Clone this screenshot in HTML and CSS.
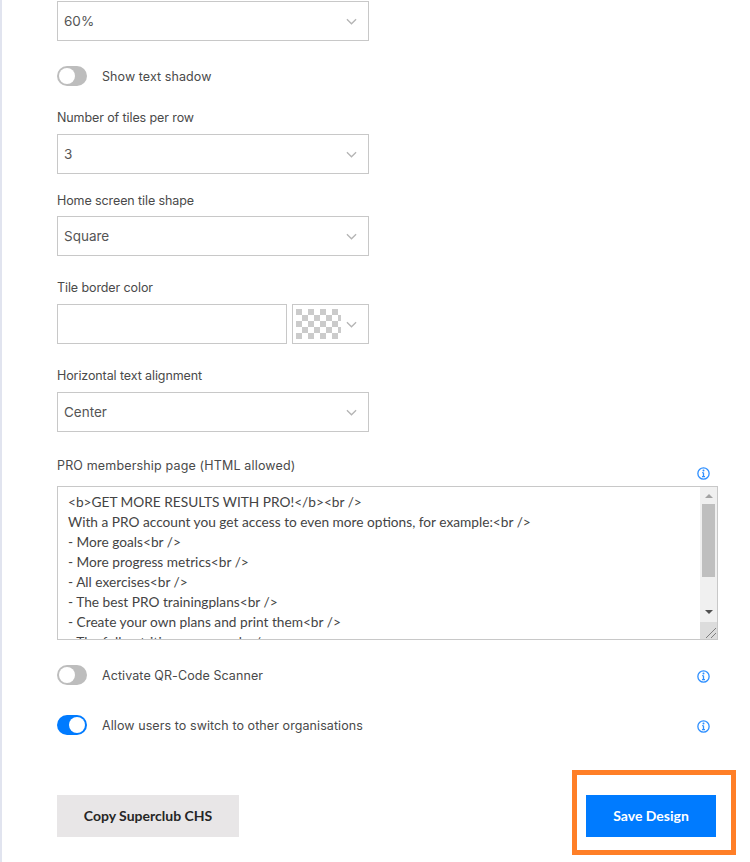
FILE: index.html
```html
<!DOCTYPE html>
<html lang="en">
<head>
  <meta charset="UTF-8" />
  <title>Design settings</title>
  <link rel="stylesheet" href="styles.css">
</head>
<body>
  <div class="page">
    <div class="select first"><span>60%</span><svg class="chev" viewBox="0 0 12 7"><path d="M1 1l5 5 5-5"/></svg></div>

    <div class="toggle-row shadow-row">
      <span class="toggle"></span>
      <span class="toggle-label">Show text shadow</span>
    </div>

    <label class="field-label tiles-label">Number of tiles per row</label>
    <div class="select"><span>3</span><svg class="chev" viewBox="0 0 12 7"><path d="M1 1l5 5 5-5"/></svg></div>

    <label class="field-label shape-label">Home screen tile shape</label>
    <div class="select"><span>Square</span><svg class="chev" viewBox="0 0 12 7"><path d="M1 1l5 5 5-5"/></svg></div>

    <label class="field-label border-label">Tile border color</label>
    <div class="color-row">
      <div class="color-input"></div>
      <div class="color-pick">
        <span class="checker"></span>
        <svg class="chev" viewBox="0 0 12 7"><path d="M1 1l5 5 5-5"/></svg>
      </div>
    </div>

    <label class="field-label align-label">Horizontal text alignment</label>
    <div class="select"><span>Center</span><svg class="chev" viewBox="0 0 12 7"><path d="M1 1l5 5 5-5"/></svg></div>

    <div class="pro-head">
      <label class="field-label pro-label">PRO membership page (HTML allowed)</label>
      <svg class="info" viewBox="0 0 12 12"><circle cx="6" cy="6" r="5.2"/><path d="M6 5.2v3.6M4.6 8.9h2.8M4.8 5.2H6"/><circle class="dot" cx="6" cy="3.2" r=".9"/></svg>
    </div>
    <div class="textarea">
      <div class="textarea-text">&lt;b&gt;GET MORE RESULTS WITH PRO!&lt;/b&gt;&lt;br /&gt;
With a PRO account you get access to even more options, for example:&lt;br /&gt;
- More goals&lt;br /&gt;
- More progress metrics&lt;br /&gt;
- All exercises&lt;br /&gt;
- The best PRO trainingplans&lt;br /&gt;
- Create your own plans and print them&lt;br /&gt;
- The full nutrition program&lt;br /&gt;</div>
      <div class="scrollbar">
        <span class="arrow up"></span>
        <span class="thumb"></span>
        <span class="arrow down"></span>
        <span class="grip"><svg viewBox="0 0 17 17"><path d="M6 16L16 6M11 16l5-5"/></svg></span>
      </div>
    </div>

    <div class="toggle-row qr-row">
      <span class="toggle"></span>
      <span class="toggle-label">Activate QR-Code Scanner</span>
      <svg class="info" viewBox="0 0 12 12"><circle cx="6" cy="6" r="5.2"/><path d="M6 5.2v3.6M4.6 8.9h2.8M4.8 5.2H6"/><circle class="dot" cx="6" cy="3.2" r=".9"/></svg>
    </div>
    <div class="toggle-row switch-row">
      <span class="toggle on"></span>
      <span class="toggle-label">Allow users to switch to other organisations</span>
      <svg class="info" viewBox="0 0 12 12"><circle cx="6" cy="6" r="5.2"/><path d="M6 5.2v3.6M4.6 8.9h2.8M4.8 5.2H6"/><circle class="dot" cx="6" cy="3.2" r=".9"/></svg>
    </div>

    <div class="actions">
      <button class="btn btn-copy">Copy Superclub CHS</button>
      <button class="btn btn-save">Save Design</button>
    </div>
  </div>
</body>
</html>
```

FILE: styles.css
```css
html, body {
  margin: 0;
  background: #fff;
}

.page {
  box-sizing: border-box;
  width: 750px;
  height: 862px;
  padding: 1px 32px 0 55px;
  border-left: 2px solid #e1e4ef;
  font-family: 'Inter', 'Open Sans', sans-serif;
  color: #4a4a4a;
  overflow: hidden;
}

.select {
  box-sizing: border-box;
  width: 312px;
  height: 40px;
  padding: 0 11px 0 6px;
  border: 1px solid #c8c8c8;
  display: flex;
  align-items: center;
  justify-content: space-between;
  font-size: 13.5px;
  color: #555;
}

.chev {
  width: 11px;
  height: 7px;
  fill: none;
  stroke: #b4b4b4;
  stroke-width: 1.4;
}

.field-label {
  display: block;
  height: 16px;
  line-height: 16px;
  font-size: 12.5px;
  letter-spacing: -0.1px;
  color: #4a4a4a;
}

.tiles-label { margin: 24px 0 8px; }
.shape-label { margin: 19px 0 7px; }
.border-label { margin: 24px 0 8px; }
.align-label { margin: 24px 0 8px; }
.pro-label { letter-spacing: 0.16px; }

.toggle-row {
  display: flex;
  align-items: center;
  height: 20px;
}

.shadow-row { margin-top: 25px; }
.qr-row { margin-top: 25px; }
.switch-row { margin-top: 30px; }

.toggle {
  position: relative;
  width: 30px;
  height: 20px;
  border-radius: 10px;
  background: #bdbdbd;
  flex: none;
}

.toggle::after {
  content: "";
  position: absolute;
  top: 2px;
  left: 2px;
  width: 16px;
  height: 16px;
  border-radius: 50%;
  background: #fff;
}

.toggle.on {
  background: #007bff;
}

.toggle.on::after {
  left: 12px;
}

.toggle-label {
  margin-left: 15px;
  font-size: 12.5px;
  letter-spacing: 0.08px;
  color: #4a4a4a;
}

.color-row {
  display: flex;
  gap: 5px;
  width: 312px;
}

.color-input,
.color-pick {
  box-sizing: border-box;
  height: 40px;
  border: 1px solid #c8c8c8;
}

.color-input {
  width: 230px;
}

.color-pick {
  width: 77px;
  padding: 0 11px 0 3px;
  display: flex;
  align-items: center;
  justify-content: space-between;
}

.checker {
  width: 45px;
  height: 30px;
  background-color: #fff;
  background-image: conic-gradient(#fff 25%, #cbcbcb 0 50%, #fff 0 75%, #cbcbcb 0);
  background-size: 12px 12px;
}

.pro-head {
  display: flex;
  justify-content: space-between;
  align-items: flex-start;
  margin-top: 26px;
  height: 28px;
  padding-right: 8px;
}

.info {
  width: 13px;
  height: 13px;
  margin-top: 9px;
  fill: none;
  stroke: #2e8fff;
  stroke-width: 1.2;
  flex: none;
}

.info .dot {
  fill: #2e8fff;
  stroke: none;
}

.textarea {
  box-sizing: border-box;
  width: 661px;
  height: 154px;
  border: 1px solid #c8c8c8;
  display: flex;
  overflow: hidden;
}

.textarea-text {
  flex: 1;
  padding: 5px 10px;
  font-family: 'Lato', sans-serif;
  font-size: 13.7px;
  line-height: 20px;
  color: #444;
  white-space: pre-line;
  overflow: hidden;
}

.scrollbar {
  width: 17px;
  background: #f0f0f0;
  display: flex;
  flex-direction: column;
  align-items: center;
  position: relative;
}

.thumb {
  width: 13px;
  height: 73px;
  margin-top: 6px;
  background: #bfbfbf;
}

.arrow {
  width: 0;
  height: 0;
  border-left: 4px solid transparent;
  border-right: 4px solid transparent;
}

.arrow.up {
  margin-top: 7px;
  border-bottom: 4px solid #a3a3a3;
}

.arrow.down {
  margin-top: 33px;
  border-top: 4px solid #505050;
}

.grip {
  position: absolute;
  left: 0;
  bottom: 0;
  width: 17px;
  height: 17px;
  background: #dcdcdc;
}

.grip svg {
  display: block;
  fill: none;
  stroke: #666;
  stroke-width: 0.8;
}

.qr-row .info,
.switch-row .info {
  margin: 3px 0 0 auto;
}

.qr-row,
.switch-row {
  padding-right: 8px;
}

.actions {
  display: flex;
  justify-content: space-between;
  margin-top: 60px;
  padding-right: 2px;
}

.btn {
  height: 42px;
  padding: 0 0 2px;
  border: none;
  border-radius: 0;
  font-family: 'Lato', sans-serif;
  font-size: 14px;
  font-weight: 700;
}

.btn-copy {
  width: 182px;
  background: #e8e6e7;
  color: #262626;
}

.btn-save {
  position: relative;
  width: 130px;
  background: #007bff;
  color: #fff;
}

/* orange annotation box round the save button */
.btn-save::after {
  content: "";
  position: absolute;
  top: -25px;
  left: -14px;
  right: -20px;
  bottom: -18px;
  border: 5px solid #ff7f27;
}
```
